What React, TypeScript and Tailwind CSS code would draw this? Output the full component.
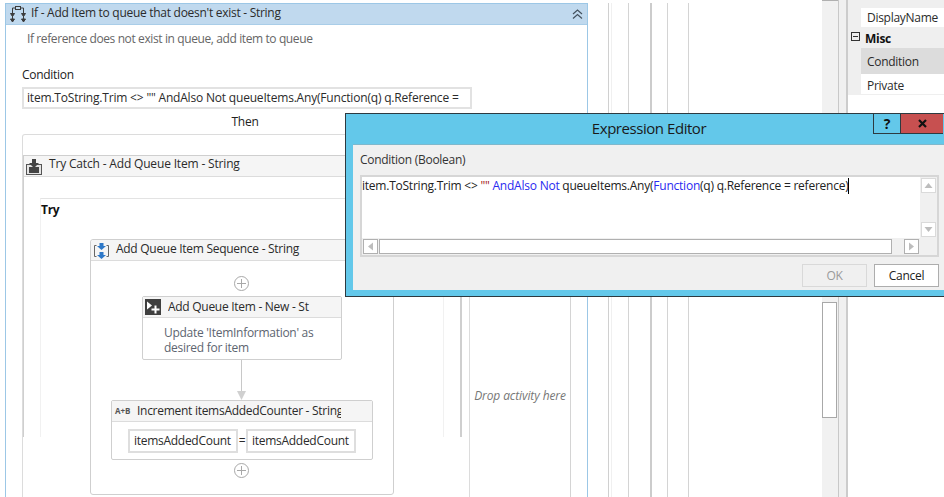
import React from "react";

const IfIcon = () => (
  <svg width="18" height="18" viewBox="0 0 18 18" fill="none" stroke="#3c3c3c" strokeWidth="1">
    <rect x="6.5" y="1.5" width="5" height="3" />
    <path d="M6.5 3H3.5V8M11.5 3H14.5V8" />
    <path d="M1.5 8.5h4l-2 3zM12.5 8.5h4l-2 3z" fill="#3c3c3c" />
    <path d="M3.5 11v4M14.5 11v4" />
    <path d="M1.5 14h4l-2 3zM12.5 14h4l-2 3z" fill="#3c3c3c" />
  </svg>
);

const TryIcon = () => (
  <svg width="16" height="17" viewBox="0 0 16 17">
    <rect x="0.5" y="6.5" width="15" height="10" fill="#e4e4e4" stroke="#555" />
    <rect x="3" y="9" width="10" height="6" fill="#444" />
    <path d="M6 1h4v4h3l-5 5-5-5h3z" fill="#444" />
  </svg>
);

const SeqIcon = () => (
  <svg width="17" height="17" viewBox="0 0 17 17">
    <path d="M3.5 3.5H1.5V14.5H3.5M13.5 3.5H15.5V14.5H13.5" fill="none" stroke="#666" />
    <path d="M6.5 1h4v3h2.500l-4.500 4-4.500-4h2.500z" fill="#2e78c8" />
    <path d="M6.500 10h4v3h2.500l-4.500 4-4.500-4h2.500z" fill="#2e78c8" />
  </svg>
);

const AddIcon = () => (
  <svg width="16" height="16" viewBox="0 0 16 16">
    <rect width="16" height="16" fill="#3f3f3f" />
    <path d="M2 2.500l5 4-5 4z" fill="#fff" />
    <path d="M9.500 6.500h2v3h3v2h-3v3h-2v-3h-3v-2h3z" fill="#fff" />
  </svg>
);

const Plus = () => (
  <svg width="15" height="15" viewBox="0 0 15 15" fill="none" stroke="#a8a8a8" className="shrink-0">
    <circle cx="7.500" cy="7.500" r="7" />
    <path d="M7.500 3v9M3 7.500h9" />
  </svg>
);

const Chevrons = () => (
  <svg width="11" height="10" viewBox="0 0 11 10" fill="none" stroke="#44525f" strokeWidth="1.200">
    <path d="M1 5l4.500-4 4.500 4M1 9.500l4.500-4 4.500 4" />
  </svg>
);

const Arrow = () => (
  <svg width="11" height="40" viewBox="0 0 11 40" className="mr-[2px] shrink-0">
    <path d="M5.500 0v32" stroke="#c8c8c8" strokeWidth="1" />
    <path d="M1 31h9l-4.500 9z" fill="#d0d0d0" />
  </svg>
);

const Tri = ({ d }: { d: string }) => (
  <svg width="9" height="9" viewBox="0 0 9 9">
    <path d={d} fill="#bdbdbd" />
  </svg>
);

export default function App() {
  return (
    <div className="relative flex h-[497px] w-[944px] overflow-hidden bg-white font-['Open_Sans',sans-serif] text-[12px] tracking-[-0.28px] text-[#2b2b2b]">
      {/* designer canvas */}
      <div className="flex h-full w-[822px] shrink-0 overflow-hidden pl-[5px] pt-[3px]">
        <div className="h-[700px] w-[583px] shrink-0 border-x border-t border-[#9cc7e6]">
          <div className="flex h-[21px] items-center border-b border-[#a9cde8] bg-[#c0d9ee] pl-[3px] pr-[4px]">
            <IfIcon />
            <span className="ml-[4px] flex-1 -translate-y-[1px] whitespace-nowrap">If - Add Item to queue that doesn't exist - String</span>
            <Chevrons />
          </div>
          <div className="pl-[16px]">
            <div className="mt-[4px] pl-[5px] leading-[20px] tracking-[-0.39px] text-[#666]">If reference does not exist in queue, add item to queue</div>
            <div className="mt-[17px] leading-[18px] text-[#222]">Condition</div>
            <div className="mt-[3px] flex h-[22px] w-[450px] items-center overflow-hidden whitespace-nowrap border-2 border-[#e2e2e2] pl-[3px] tracking-[-0.19px]">
              item.ToString.Trim &lt;&gt; "" AndAlso Not queueItems.Any(Function(q) q.Reference =
            </div>
            <div className="h-[25px] w-[446px] pt-[4px] text-center leading-[18px] text-[#222]">Then</div>
            <div className="flex">
              <div className="h-[524px] w-[448px] shrink-0 rounded-t-[3px] border-x border-t border-[#dcdcdc] pt-[20px]">
                <div className="w-[439px] border-l border-r-2 border-t border-[#cfcfcf]">
                  <div className="flex h-[21px] items-center border-b border-[#dcdcdc] bg-[#f5f5f5] pl-[2px]">
                    <TryIcon />
                    <span className="ml-[7px] -translate-y-[2px] whitespace-nowrap tracking-[-0.17px]">Try Catch - Add Queue Item - String</span>
                  </div>
                  <div className="pl-[16px] pt-[21px]">
                    <div className="h-[239px] w-[404px] border-x border-t border-x-[#f1f1f1] border-t-[#e3e3e3]">
                      <div className="h-[24px] pt-[1px] text-[12px] font-bold leading-[20px] text-[#111]">Try</div>
                      <div className="ml-[49px] mt-[16px] flex h-[256px] w-[304px] flex-col items-center rounded-[3px] border border-[#cfcfcf] bg-white">
                        <div className="flex h-[21px] w-full shrink-0 items-center rounded-t-[3px] border-b border-[#dcdcdc] bg-[#f5f5f5] pl-[2px]">
                          <SeqIcon />
                          <span className="ml-[6px] -translate-y-[1px] whitespace-nowrap">Add Queue Item Sequence - String</span>
                        </div>
                        <div className="mr-[2px] mt-[15px] shrink-0"><Plus /></div>
                        <div className="mt-[5px] h-[64px] w-[200px] shrink-0 rounded-[2px] border border-[#cfcfcf]">
                          <div className="flex h-[21px] items-center border-b border-[#dcdcdc] bg-[#f5f5f5] pl-[2px]">
                            <AddIcon />
                            <span className="ml-[7px] w-[142px] overflow-hidden whitespace-nowrap">Add Queue Item - New - St</span>
                          </div>
                          <div className="pl-[21px] pt-[7px] leading-[15px] text-[#5d6570]">
                            Update 'ItemInformation' as<br />desired for item
                          </div>
                        </div>
                        <Arrow />
                        <div className="h-[60px] w-[262px] shrink-0 rounded-[2px] border border-[#cfcfcf]">
                          <div className="flex h-[21px] items-center border-b border-[#dcdcdc] bg-[#f5f5f5] pl-[3px]">
                            <span className="w-[22px] text-[8px] font-bold tracking-normal text-[#555]">A+B</span>
                            <span className="w-[204px] overflow-hidden whitespace-nowrap">Increment itemsAddedCounter - String</span>
                          </div>
                          <div className="flex items-center pl-[16px] pt-[7px]">
                            <div className="flex h-[24px] w-[110px] items-center overflow-hidden whitespace-nowrap border-2 border-[#dedede] pl-[4px]">itemsAddedCount</div>
                            <span className="w-[8px] text-center">=</span>
                            <div className="flex h-[24px] w-[110px] items-center overflow-hidden whitespace-nowrap border-2 border-[#dedede] pl-[4px]">itemsAddedCount</div>
                          </div>
                        </div>
                        <div className="mr-[2px] mt-[3px] shrink-0"><Plus /></div>
                      </div>
                    </div>
                  </div>
                </div>
              </div>
              <div className="flex h-[524px] w-[101px] shrink-0 items-center justify-center border-r border-[#d4d4d4] italic tracking-[-0.1px] text-[#777]">
                <span className="whitespace-nowrap">Drop activity here</span>
              </div>
            </div>
          </div>
        </div>
        {/* nested containers continuing to the right */}
        <div className="h-full w-[21px] shrink-0 border-r border-[#d0d0d0]" />
        <div className="h-full w-[3px] shrink-0 border-r border-[#f0f0f0]" />
        <div className="h-full w-[17px] shrink-0 border-r border-[#d4d4d4]" />
        <div className="h-full w-[23px] shrink-0 border-r-2 border-[#cccccc]" />
        <div className="h-full w-[16px] shrink-0 border-r border-[#d4d4d4]" />
        <div className="h-full w-[21px] shrink-0 border-r border-[#d4d4d4]" />
      </div>

      {/* scrollbar */}
      <div className="flex h-full w-[17px] shrink-0 flex-col border-r border-[#c8c8c8] bg-[#f1f1f1]">
        <div className="h-[1px] w-full bg-[#b0b0b0]" />
        <div className="mt-[301px] h-[116px] w-[15px] border border-[#a8a8a8] bg-white" />
      </div>
      <div className="h-full w-[7px] shrink-0 bg-[#f0f0f0]" />

      {/* property grid */}
      <div className="h-full flex-1 border-l-2 border-[#cccccc] leading-none">
        <div className="flex h-[8px] items-end overflow-hidden bg-[#efefef] pl-[17px] font-bold text-[#111]">
          <span className="-translate-y-[2px] leading-[20px]">Common</span>
        </div>
        <div className="flex h-[19px] bg-[#efefef] pl-[13px]">
          <div className="flex flex-1 items-center bg-white pl-[6px] pt-[1px]">DisplayName</div>
        </div>
        <div className="flex h-[21px] items-center bg-[#efefef] pl-[3px] pt-[2px] font-bold text-[#111]">
          <span className="relative h-[9px] w-[9px] -translate-y-[2px] border border-[#333]">
            <span className="absolute left-[1px] top-[3px] h-[1px] w-[5px] bg-[#333]" />
          </span>
          <span className="ml-[5px] text-[12px]">Misc</span>
        </div>
        <div className="flex h-[26px] bg-[#efefef] pl-[13px]">
          <div className="flex flex-1 items-center bg-[#dcdcdc] pl-[6px] pt-[2px]">Condition</div>
        </div>
        <div className="flex h-[21px] border-b border-[#efefef] bg-[#efefef] pl-[13px]">
          <div className="flex flex-1 items-center bg-white pl-[6px] pt-[3px]">Private</div>
        </div>
      </div>

      {/* Expression Editor dialog */}
      <div className="absolute left-[345px] top-[113px] flex h-[184px] w-[600px] flex-col border border-[#2d3a40] bg-[#63c8ea] pb-[6px] pl-[7px]">
        <div className="relative h-[30px] shrink-0">
          <div className="pl-[1px] pt-[4px] text-center text-[15px] leading-[20px] tracking-[-0.45px] text-[#1a1a1a]">Expression Editor</div>
          <div className="absolute right-[1px] top-[-1px] flex h-[21px]">
            <div className="flex w-[28px] items-center justify-center border border-[#2d3a40] text-[14px] font-bold text-[#111]">?</div>
            <div className="flex w-[42px] items-center justify-center border-y border-[#2d3a40] bg-[#c75050] text-[14px] font-bold text-[#111]">
              <svg width="9" height="9" viewBox="0 0 9 9" stroke="#111" strokeWidth="2.200"><path d="M1 1l7 7M8 1l-7 7" /></svg>
            </div>
          </div>
        </div>
        <div className="flex-1 border-t border-[#7fb8cc] bg-[#f0f0f0] pl-[7px] pr-[5px]">
          <div className="pt-[6px] leading-[18px] text-[#333]">Condition (Boolean)</div>
          <div className="mt-[6px] flex h-[82px] w-[579px] flex-col border-2 border-[#d6d6d6] bg-white">
            <div className="flex min-h-0 flex-1">
              <div className="flex-1 whitespace-nowrap leading-[18px] tracking-[-0.23px] text-[#222]">
                item.ToString.Trim &lt;&gt; <span className="text-[#a31515]">""</span> <span className="text-[#2a2af0]">AndAlso Not</span> queueItems.Any(<span className="text-[#2a2af0]">Function</span>(q) q.Reference = reference)<span className="ml-[-1px] inline-block h-[16px] w-[1px] bg-black align-[-4px]" />
              </div>
              <div className="flex w-[17px] shrink-0 flex-col items-center justify-between bg-[#f0f0f0] py-[1px]">
                <div className="flex h-[15px] w-[15px] items-center justify-center border border-[#dadada] bg-white"><Tri d="M4.500 2l4 5h-8z" /></div>
                <div className="flex h-[15px] w-[15px] items-center justify-center border border-[#dadada] bg-white"><Tri d="M4.500 7l4-5h-8z" /></div>
              </div>
            </div>
            <div className="flex h-[17px] shrink-0 items-center bg-[#f0f0f0] pl-[1px]">
              <div className="flex h-[15px] w-[15px] shrink-0 items-center justify-center border border-[#b0b0b0] bg-white"><Tri d="M2 4.500l5-4v8z" /></div>
              <div className="ml-[1px] h-[15px] w-[513px] shrink-0 border border-[#b0b0b0] bg-white" />
              <div className="ml-[12px] flex h-[15px] w-[15px] shrink-0 items-center justify-center border border-[#b0b0b0] bg-white"><Tri d="M7 4.500l-5-4v8z" /></div>
            </div>
          </div>
          <div className="mt-[7px] flex w-[579px] justify-end gap-[7px]">
            <div className="flex h-[23px] w-[65px] items-center justify-center border border-[#d9d9d9] text-[#9a9a9a]">OK</div>
            <div className="flex h-[23px] w-[65px] items-center justify-center border border-[#adadad] bg-white text-[#222]">Cancel</div>
          </div>
        </div>
      </div>
    </div>
  );
}
